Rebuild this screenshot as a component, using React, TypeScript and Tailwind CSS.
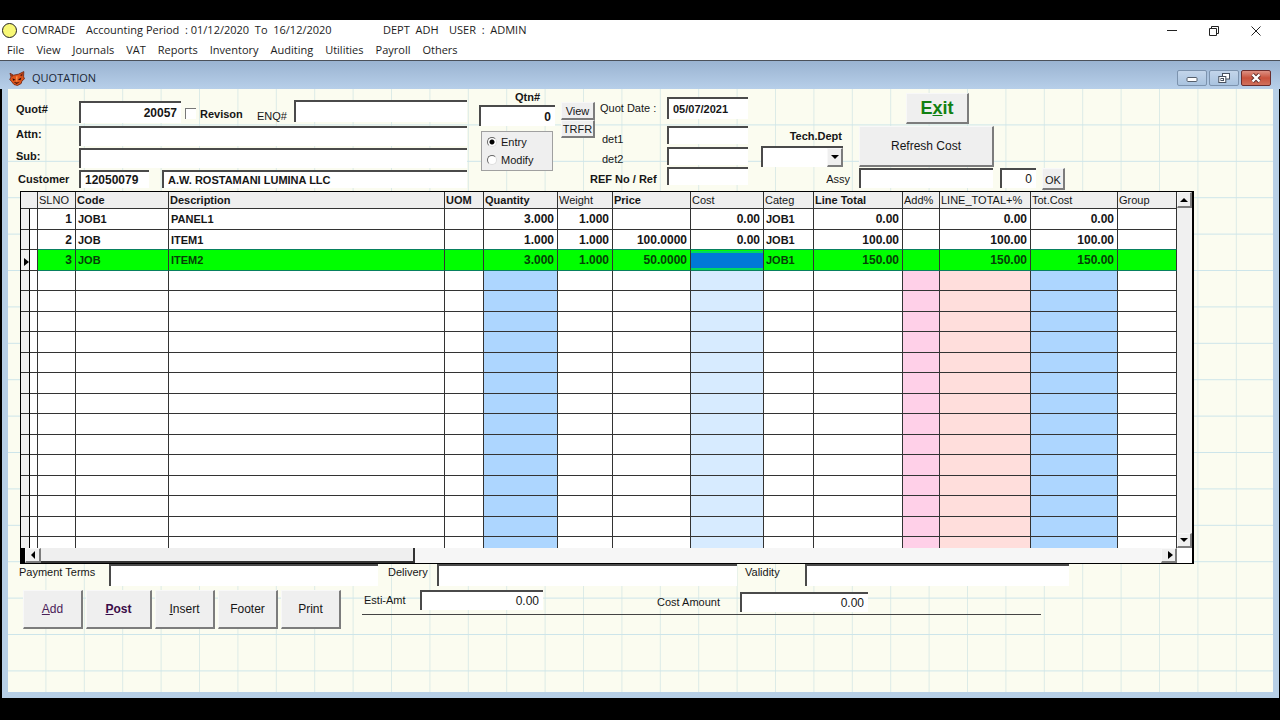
import type { ReactNode } from 'react';
import { clsx } from 'clsx';

const menuItems = ['File', 'View', 'Journals', 'VAT', 'Reports', 'Inventory', 'Auditing', 'Utilities', 'Payroll', 'Others'];

type Column = {
  key: string;
  title: string;
  width: string;
  bold?: boolean;
  numeric?: boolean;
  empty?: string;
};

const columns: Column[] = [
  { key: 'slno', title: 'SLNO', width: 'w-[38px]', numeric: true },
  { key: 'code', title: 'Code', width: 'w-[93px]', bold: true },
  { key: 'description', title: 'Description', width: '', bold: true },
  { key: 'uom', title: 'UOM', width: 'w-[39px]', bold: true },
  { key: 'quantity', title: 'Quantity', width: 'w-[74px]', bold: true, numeric: true, empty: 'bg-[#add6ff]' },
  { key: 'weight', title: 'Weight', width: 'w-[55px]', numeric: true },
  { key: 'price', title: 'Price', width: 'w-[78px]', bold: true, numeric: true },
  { key: 'cost', title: 'Cost', width: 'w-[73px]', numeric: true, empty: 'bg-[#d7ebff]' },
  { key: 'categ', title: 'Categ', width: 'w-[50px]' },
  { key: 'lineTotal', title: 'Line Total', width: 'w-[89px]', bold: true, numeric: true },
  { key: 'add', title: 'Add%', width: 'w-[37px]', numeric: true, empty: 'bg-[#ffd0e8]' },
  { key: 'lineTotalPlus', title: 'LINE_TOTAL+%', width: 'w-[91px]', numeric: true, empty: 'bg-[#ffdedc]' },
  { key: 'totCost', title: 'Tot.Cost', width: 'w-[87px]', numeric: true, empty: 'bg-[#add6ff]' },
  { key: 'group', title: 'Group', width: 'w-[59px]' },
];

const rows: Record<string, string>[] = [
  { slno: '1', code: 'JOB1', description: 'PANEL1', quantity: '3.000', weight: '1.000', cost: '0.00', categ: 'JOB1', lineTotal: '0.00', lineTotalPlus: '0.00', totCost: '0.00' },
  { slno: '2', code: 'JOB', description: 'ITEM1', quantity: '1.000', weight: '1.000', price: '100.0000', cost: '0.00', categ: 'JOB1', lineTotal: '100.00', lineTotalPlus: '100.00', totCost: '100.00' },
  { slno: '3', code: 'JOB', description: 'ITEM2', quantity: '3.000', weight: '1.000', price: '50.0000', categ: 'JOB1', lineTotal: '150.00', lineTotalPlus: '150.00', totCost: '150.00' },
];

const currentRow = 2;
const emptyRows = 13;

const sunken = 'min-w-0 border-t-2 border-l-2 border-[#4a4a4a] bg-white px-1 outline-none';
const raised = 'border-t border-l border-r-2 border-b-2 border-t-[#f8f8f8] border-l-[#f8f8f8] border-r-[#7c7c7c] border-b-[#7c7c7c] bg-[#efefef]';

function TextField({ id, value = '', label, className }: { id: string; value?: string; label?: string; className?: string }) {
  return <input id={id} type="text" aria-label={label} defaultValue={value} className={clsx(sunken, className)} />;
}

function Arrow({ direction }: { direction: 'up' | 'down' | 'left' | 'right' }) {
  const points = {
    up: '0,6 8,6 4,2',
    down: '0,2 8,2 4,6',
    left: '6,0 6,8 2,4',
    right: '3,0 3,8 8,4',
  }[direction];
  return (
    <svg viewBox="0 0 8 8" className="size-2 shrink-0" aria-hidden="true">
      <polygon points={points} fill="#000" />
    </svg>
  );
}

function ScrollButton({ direction, className }: { direction: 'up' | 'down' | 'left' | 'right'; className: string }) {
  return (
    <button type="button" aria-label={`Scroll ${direction}`} className={clsx('flex shrink-0 items-center justify-center', raised, className)}>
      <Arrow direction={direction} />
    </button>
  );
}

function FoxIcon() {
  return (
    <svg viewBox="0 0 16 15" className="h-[15px] w-4" aria-hidden="true">
      <path d="M1 2.2 4.500 4.200 9.500 3.200 14.800 0.600 14.600 5.500 15.400 8 13 9.800 12.200 12.500 8.500 14.500 5 13.500 2.500 10.500 0.800 8.500 2 6z" fill="#e0561c" stroke="#6a200e" strokeWidth="0.800" />
      <path d="M2.200 3.400 4.200 4.800 2.900 6zM13.800 2 10.800 4.200l2.400 1.200z" fill="#6e2412" />
      <path d="M3.500 7.200l3 1.600-2.300 1zM12.500 6.500 9 8.400l2.400 0.800z" fill="#2a0d08" />
      <path d="M7 5.500l1.500-.2-.2 5.500-1-.2z" fill="#f99a52" />
      <path d="M4.500 11l3.200 2 3.300-2.200-3 .6z" fill="#431309" />
    </svg>
  );
}

/** Outer application frame: caption and menu bar. */
function AppHeader() {
  return (
    <header className="border-b border-[#4b5059] bg-white text-[11px] text-[#1c1c1c]">
      <div className="flex h-[21px] items-center pl-[2px] whitespace-pre">
        <span className="size-[15px] rounded-full border border-[#222] bg-[#f8f876]" />
        <h1 className="ml-[5px] w-16">COMRADE</h1>
        <p className="w-[297px]">Accounting Period  : 01/12/2020  To  16/12/2020</p>
        <p className="w-[66px]">DEPT  ADH</p>
        <p>USER  :  ADMIN</p>
        <div className="ml-auto flex items-center gap-8 pr-[19px]">
          <button type="button" aria-label="Minimize">
            <svg viewBox="0 0 10 10" className="size-[10px]"><path d="M0 4.500h10" stroke="#222" /></svg>
          </button>
          <button type="button" aria-label="Restore">
            <svg viewBox="0 0 10 10" className="size-[10px]" fill="none" stroke="#222"><path d="M.5 2.500h7v7h-7zM2.500 2.500v-2h7v7h-2" /></svg>
          </button>
          <button type="button" aria-label="Close">
            <svg viewBox="0 0 10 10" className="size-[10px]"><path d="M.5.5l9 9M9.500.5l-9 9" stroke="#222" /></svg>
          </button>
        </div>
      </div>
      <nav className="flex h-[19px] items-center gap-3 pl-[7px]">
        {menuItems.map((item) => (
          <button key={item} type="button">{item}</button>
        ))}
      </nav>
    </header>
  );
}

function CaptionButton({ label, danger, children }: { label: string; danger?: boolean; children: ReactNode }) {
  return (
    <button
      type="button"
      aria-label={label}
      className={clsx(
        'flex h-4 w-[30px] items-center justify-center rounded-[2px] border',
        danger
          ? 'border-[#6b2d2d] bg-linear-to-b from-[#dc9083] via-[#c8513c] to-[#d0705c]'
          : 'border-[#7c93ae] bg-linear-to-b from-[#c3d5ea] to-[#a9c3df]',
      )}
    >
      {children}
    </button>
  );
}

function WindowCaption() {
  return (
    <div className="flex h-7 items-center bg-linear-to-b from-[#9ab3d1] to-[#b7cfe9] pt-[6px] pr-[9px] pl-[9px]">
      <FoxIcon />
      <h2 className="ml-[7px] text-[11px] text-[#1a2636]">QUOTATION</h2>
      <div className="ml-auto flex gap-[2px]">
        <CaptionButton label="Minimize window">
          <svg viewBox="0 0 12 10" className="h-[10px] w-3"><rect x="1" y="4.500" width="10" height="4" rx="1" fill="#fff" stroke="#555f6c" /></svg>
        </CaptionButton>
        <CaptionButton label="Restore window">
          <svg viewBox="0 0 12 10" className="h-[10px] w-3" fill="#fff" stroke="#46505e">
            <rect x="4.500" y="0.500" width="7" height="5.500" />
            <rect x="0.800" y="3.500" width="7" height="6" />
            <rect x="3" y="5.500" width="2.500" height="2" />
          </svg>
        </CaptionButton>
        <CaptionButton label="Close window" danger>
          <svg viewBox="0 0 12 10" className="h-[10px] w-3">
            <path d="M2.500 1.500l7 7M9.500 1.500l-7 7" stroke="#5a2a28" strokeWidth="4" />
            <path d="M2.500 1.500l7 7M9.500 1.500l-7 7" stroke="#fff" strokeWidth="2.400" />
          </svg>
        </CaptionButton>
      </div>
    </div>
  );
}

/** Ruled paper drawn behind the form. */
function PaperBackground() {
  return (
    <svg className="col-start-1 row-start-1 h-full w-full" aria-hidden="true">
      <defs>
        <pattern id="paper" width="38.400" height="36.400" patternUnits="userSpaceOnUse">
          <path d="M38 0v36.400" stroke="#d9eae6" />
          <path d="M0 36h38.400" stroke="#cde5ea" />
        </pattern>
      </defs>
      <rect width="100%" height="100%" fill="url(#paper)" />
    </svg>
  );
}

function QuotationHeader() {
  return (
    <div className="flex h-[102px] pr-[208px] pl-2">
      <div className="flex flex-1 flex-col gap-[2px] pt-2 font-bold">
        <div className="flex h-[27px] items-end">
          <label htmlFor="quot" className="w-[63px] self-start pt-1">Quot#</label>
          <TextField id="quot" value="20057" className="mb-px h-[22px] w-[102px] text-right text-[12px]" />
          <input id="revision" type="checkbox" className="mb-[5px] ml-1 size-[11px] shrink-0 appearance-none border-t border-l border-[#777] bg-white" />
          <label htmlFor="revision" className="mb-[2px] ml-1 w-[57px]">Revison</label>
          <label htmlFor="enq" className="w-[37px] font-normal">ENQ#</label>
          <TextField id="enq" className="mb-[2px] h-[22px] flex-1" />
        </div>
        <div className="flex h-5">
          <label htmlFor="attn" className="w-[63px]">Attn:</label>
          <TextField id="attn" className="h-5 flex-1" />
        </div>
        <div className="flex h-5">
          <label htmlFor="sub" className="w-[63px]">Sub:</label>
          <TextField id="sub" className="h-5 flex-1" />
        </div>
        <div className="flex h-[18px] items-center gap-[13px]">
          <div className="flex items-center">
            <label htmlFor="customer" className="w-[63px] pl-[2px]">Customer</label>
            <TextField id="customer" value="12050079" className="h-[18px] w-[70px] text-[12px]" />
          </div>
          <TextField id="customerName" label="Customer name" value="A.W. ROSTAMANI LUMINA LLC" className="h-[18px] flex-1" />
        </div>
      </div>

      <div className="flex w-[88px] flex-col pl-3">
        <label htmlFor="qtn" className="self-end pr-[15px] font-bold">Qtn#</label>
        <TextField id="qtn" value="0" className="h-[21px] w-[76px] text-right text-[12px] font-bold" />
        <fieldset className="mt-[5px] ml-[2px] flex h-10 w-[72px] flex-col justify-center gap-[2px] border border-[#a0a0a0] bg-[#efefef] pt-[2px] pl-[5px]">
          <Option id="entry" label="Entry" checked />
          <Option id="modify" label="Modify" />
        </fieldset>
      </div>

      <div className="flex flex-col items-start pt-[13px] pl-[6px]">
        <button type="button" className={clsx('h-[18px] w-[34px]', raised)}>View</button>
        <button type="button" className={clsx('h-[18px] w-[34px]', raised)}>TRFR</button>
      </div>

      <div className="grid w-[153px] grid-cols-[67px_1fr] grid-rows-[29px_21px_20px_20px] items-start pt-2 pl-[5px]">
        <label htmlFor="quotDate" className="pt-[3px]">Quot Date :</label>
        <TextField id="quotDate" value="05/07/2021" className="h-[22px] text-[11px] font-bold" />
        <label htmlFor="det1" className="self-end pl-[2px]">det1</label>
        <TextField id="det1" className="h-[18px]" />
        <label htmlFor="det2" className="self-end pl-[2px]">det2</label>
        <TextField id="det2" className="h-[18px]" />
        <label htmlFor="refNo" className="-ml-[10px] self-end font-bold">REF No / Ref</label>
        <TextField id="refNo" className="h-[18px]" />
      </div>

      <div className="flex w-[111px] flex-col items-end pt-[39px] pl-3">
        <label htmlFor="techDept" className="mr-[17px] font-bold">Tech.Dept</label>
        <div className="mt-[2px] mr-4 flex w-[82px] border-t-2 border-l-2 border-[#4a4a4a] bg-white">
          <select id="techDept" className="h-[19px] min-w-0 flex-1 appearance-none outline-none">
            <option></option>
          </select>
          <span className={clsx('pointer-events-none flex w-4 items-center justify-center', raised)}>
            <Arrow direction="down" />
          </span>
        </div>
        <label htmlFor="assy" className="mt-1 pr-[9px]">Assy</label>
      </div>

      <div className="flex w-[206px] flex-col pt-1">
        <button type="button" className={clsx('ml-[47px] h-[31px] w-[63px] text-[18px] font-bold text-[#118011]', raised)}>
          E<u>x</u>it
        </button>
        <button type="button" className={clsx('mt-[2px] h-[41px] w-[135px] text-[12px]', raised)}>Refresh Cost</button>
        <div className="flex items-start pt-px">
          <TextField id="assy" className="h-5 w-[134px]" />
          <TextField id="assyCount" label="Assy count" value="0" className="ml-[7px] h-5 w-9 text-right text-[12px]" />
          <button type="button" className={clsx('ml-[6px] h-[22px] w-[23px] pt-[3px]', raised)}>OK</button>
        </div>
      </div>
    </div>
  );
}

function Option({ id, label, checked }: { id: string; label: string; checked?: boolean }) {
  return (
    <div className="flex items-center gap-1">
      <input
        id={id}
        type="radio"
        name="mode"
        defaultChecked={checked}
        className="size-[10px] appearance-none rounded-full border border-[#666] border-r-[#ddd] border-b-[#ddd] bg-white checked:bg-[radial-gradient(circle,#000_2px,#fff_3px)]"
      />
      <label htmlFor={id}>{label}</label>
    </div>
  );
}

function ItemsGrid() {
  return (
    <div className="mr-[79px] ml-3 border-t border-r-2 border-b border-l border-black bg-white">
      <div className="flex">
        <table className="flex-1 table-fixed border-separate border-spacing-0">
          <colgroup>
            <col className="w-[9px]" />
            <col className="w-2" />
            {columns.map((column) => (
              <col key={column.key} className={column.width} />
            ))}
          </colgroup>
          <thead>
            <tr className="h-[17px] bg-[#efefef]">
              <th colSpan={2} className="border-r border-b border-[#333]" />
              {columns.map((column) => (
                <th
                  key={column.key}
                  className={clsx('overflow-hidden border-r border-b border-[#333] px-px text-left leading-4 whitespace-nowrap', column.bold ? 'font-bold' : 'font-normal')}
                >
                  {column.title}
                </th>
              ))}
            </tr>
          </thead>
          <tbody>
            {rows.map((row, index) => {
              const current = index === currentRow;
              return (
                <tr key={row.slno} className={clsx('h-[21px] even:h-5', current && 'bg-[#00ff00]')}>
                  <td className="border-r border-b border-r-black border-b-[#333] bg-[#efefef] p-0">
                    {current && <span className="flex justify-end pt-1"><Arrow direction="right" /></span>}
                  </td>
                  <td className="border-r border-b border-[#333] bg-white p-0" />
                  {columns.map((column) => (
                    <td
                      key={column.key}
                      className={clsx(
                        'border-r border-b border-r-[#333] p-0 leading-[18px] font-bold whitespace-nowrap',
                        index >= currentRow - 1 ? 'border-b-[#088060]' : 'border-b-[#333]',
                        column.numeric ? 'pr-[3px] text-right text-[12px]' : 'pl-[2px] text-left',
                        current && 'text-[#064006]',
                      )}
                    >
                      {current && column.key === 'cost' ? (
                        <div className="-mr-[3px] h-[19px] border-y-2 border-[#00d860] bg-[#0078d7]" />
                      ) : (
                        row[column.key]
                      )}
                    </td>
                  ))}
                </tr>
              );
            })}
            {Array.from({ length: emptyRows }, (_, index) => (
              <tr key={index} className="h-[21px] even:h-5">
                <td className="border-r border-b border-r-black border-b-[#333] bg-[#efefef] p-0" />
                <td className="border-r border-b border-[#333] p-0" />
                {columns.map((column) => (
                  <td key={column.key} className={clsx('border-r border-b border-[#333] p-0', column.empty)} />
                ))}
              </tr>
            ))}
            <tr className="h-[11px]">
              <td className="border-r border-black bg-[#efefef] p-0" />
              <td className="border-r border-[#333] p-0" />
              {columns.map((column) => (
                <td key={column.key} className={clsx('border-r border-[#333] p-0', column.empty)} />
              ))}
            </tr>
          </tbody>
        </table>
        <div className="flex w-[15px] flex-col bg-[#f0f0f0]">
          <ScrollButton direction="up" className="h-4 w-[15px]" />
          <div className="flex-1" />
          <ScrollButton direction="down" className="h-[15px] w-[15px] border-t-[#333]" />
        </div>
      </div>
      <div className="flex h-[15px] bg-[#f6f6f6]">
        <div className="w-1 bg-black" />
        <ScrollButton direction="left" className="w-4" />
        <div className="w-[374px] border-r-2 border-b-2 border-[#333] bg-[#efefef]" />
        <div className="flex-1" />
        <ScrollButton direction="right" className="w-4" />
        <div className="w-[15px] bg-white" />
      </div>
    </div>
  );
}

function QuotationFooter() {
  const actions = [
    { key: 'A', rest: 'dd', width: 'w-[60px]', style: 'text-[12px] text-[#4a2058]' },
    { key: 'P', rest: 'ost', width: 'w-[66px]', style: 'text-[12px] font-bold text-[#3a0c48]' },
    { key: 'I', rest: 'nsert', width: 'w-[60px]', style: 'text-[12px]' },
    { key: '', rest: 'Footer', width: 'w-[60px]', style: 'text-[12px]' },
    { key: '', rest: 'Print', width: 'w-[60px]', style: 'text-[12px]' },
  ];
  return (
    <div>
      <div className="flex h-[22px] items-start pr-[204px] pl-[11px]">
        <label htmlFor="payment" className="w-[90px]">Payment Terms</label>
        <TextField id="payment" className="h-[22px] w-[269px]" />
        <label htmlFor="delivery" className="w-[59px] pl-[10px]">Delivery</label>
        <TextField id="delivery" className="h-[22px] w-[300px]" />
        <label htmlFor="validity" className="w-[68px] pl-2">Validity</label>
        <TextField id="validity" className="h-[22px] flex-1" />
      </div>
      <div className="flex pr-[232px] pl-[15px]">
        <div className="flex gap-[3px] pt-1">
          {actions.map((action) => (
            <button key={action.rest} type="button" className={clsx('h-[39px]', action.width, action.style, raised)}>
              {action.key && <u>{action.key}</u>}
              {action.rest}
            </button>
          ))}
        </div>
        <div className="ml-[21px] flex h-[29px] flex-1 items-start border-b border-[#444] pt-1">
          <label htmlFor="estiAmt" className="w-[58px] pt-[2px] pl-[2px]">Esti-Amt</label>
          <TextField id="estiAmt" value="0.00" className="h-5 w-[123px] text-right text-[12px]" />
          <label htmlFor="costAmount" className="ml-[114px] w-[83px] pt-1">Cost Amount</label>
          <TextField id="costAmount" value="0.00" className="mt-[2px] h-5 w-32 text-right text-[12px]" />
        </div>
      </div>
    </div>
  );
}

export default function App() {
  return (
    <div className="flex min-h-screen flex-col bg-black pt-5 pb-[22px] font-['Open_Sans',sans-serif]">
      <AppHeader />
      <main className="flex flex-1 flex-col">
        <WindowCaption />
        <section className="mr-px ml-[2px] grid flex-1 border-r-[6px] border-b-[6px] border-l-[6px] border-[#b7cfe6] bg-[#fbfcf0] font-['Liberation_Sans',Arial,sans-serif] text-[11px] leading-4 text-[#161616]">
          <PaperBackground />
          <div className="col-start-1 row-start-1">
            <QuotationHeader />
            <ItemsGrid />
            <QuotationFooter />
          </div>
        </section>
      </main>
    </div>
  );
}
